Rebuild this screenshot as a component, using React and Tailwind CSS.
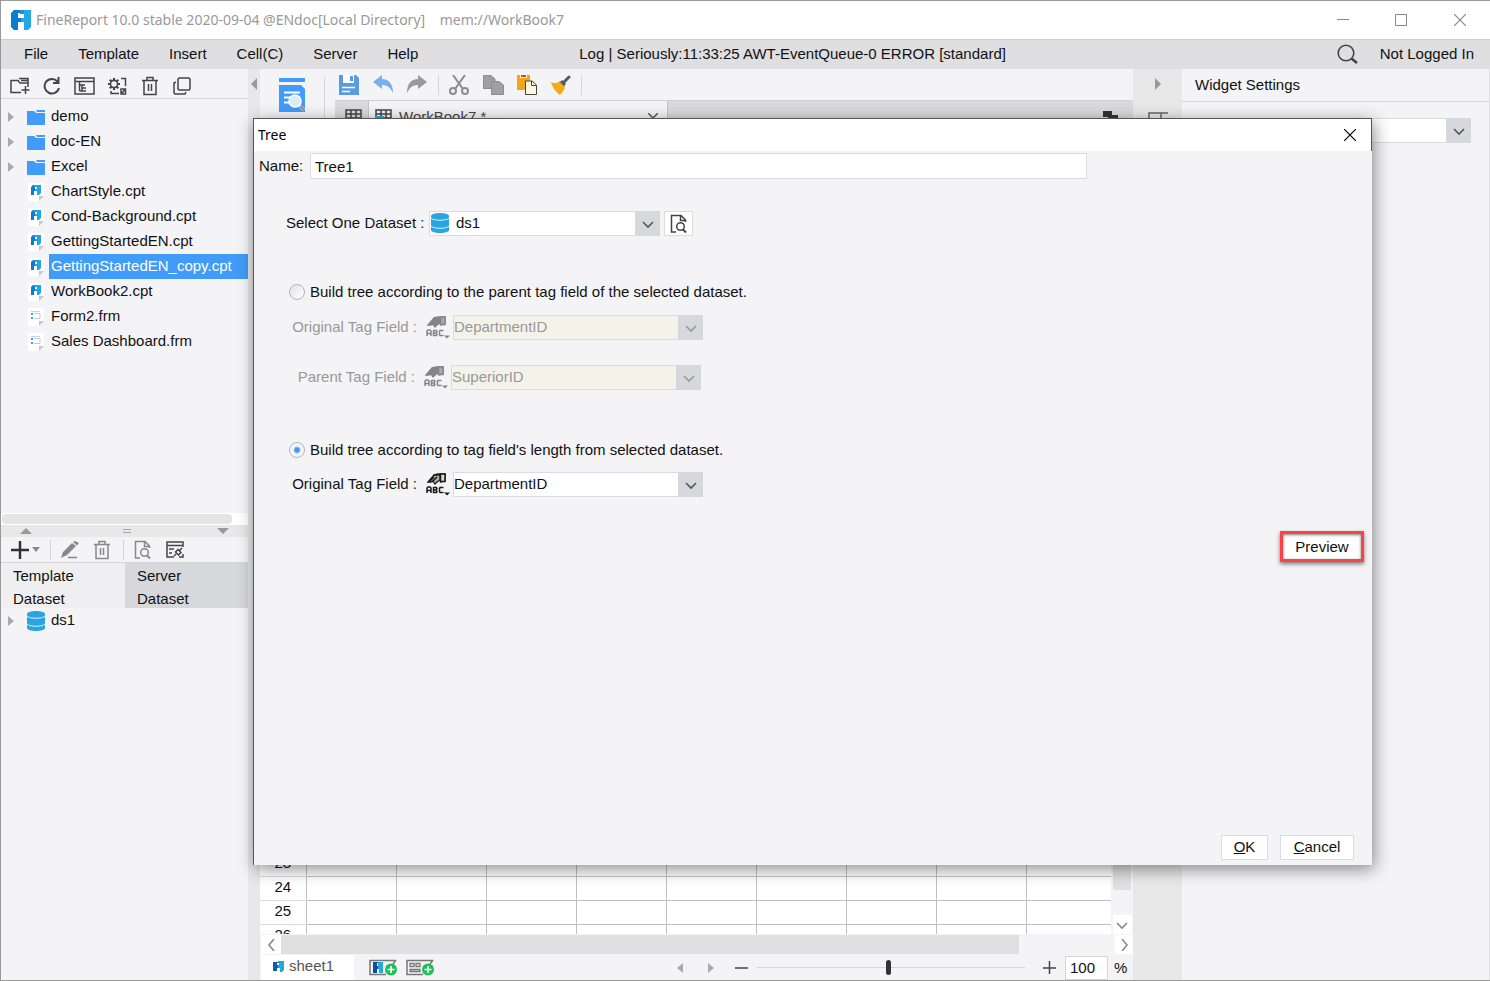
import React from 'react';

function Logo({ size = 20 }) {
  return (
    <svg width={size} height={size} viewBox="0 0 20 20" aria-hidden="true">
      <path d="M0 3L3 0H9V3H7V8H13V12H7V20H3L0 17Z" fill="#0a7dd3" />
      <path d="M9 0H20V17L17 20H13V12H10V8H13V4H9Z" fill="#27a8e6" />
      <path d="M9 0H13V4H9Z" fill="#1a93de" />
    </svg>
  );
}

function FolderIcon() {
  return (
    <svg width="18" height="16" viewBox="0 0 18 16" aria-hidden="true">
      <path d="M0 2H7L9 4H18V16H0Z" fill="#409cf8" />
      <path d="M9 1H18V3H10Z" fill="#409cf8" />
    </svg>
  );
}

function CptIcon() {
  return (
    <svg width="16" height="18" viewBox="0 0 16 18" aria-hidden="true">
      <path d="M0 0H16V12L11 18H0Z" fill="#fff" />
      <path d="M16 13L11 18V13Z" fill="#c8c8c8" />
      <path d="M3 4L5 2H7V6H9V8H6V12H3Z" fill="#0a7dd3" />
      <path d="M6 2H13V10L11 12H9V8H7V6H9V4H6Z" fill="#22a5e4" />
    </svg>
  );
}

function FrmIcon() {
  return (
    <svg width="16" height="18" viewBox="0 0 16 18" aria-hidden="true">
      <path d="M0 0H16V12L11 18H0Z" fill="#fff" />
      <path d="M16 13L11 18V13Z" fill="#c8c8c8" />
      <path d="M3 3.500H12" stroke="#c9d3dc" />
      <path d="M6 5.500H12V10.500H6" stroke="#c4ccd4" fill="none" />
      <path d="M3 5H5V7H3ZM3 9H5V11H3Z" fill="#409cf8" />
    </svg>
  );
}

function DatabaseIcon() {
  return (
    <svg width="18" height="20" viewBox="0 0 18 20" aria-hidden="true">
      <path d="M0 3C0 -1 18 -1 18 3V17C18 21 0 21 0 17Z" fill="#2ba5e0" />
      <path d="M0 5C2 8 16 8 18 5M0 13C2 16 16 16 18 13" stroke="#d5f0fc" fill="none" />
    </svg>
  );
}

function TrashIcon({ color = '#444' }) {
  return (
    <svg width="18" height="20" viewBox="0 0 18 20" fill="none" stroke={color} strokeWidth="1.500" aria-hidden="true">
      <path d="M1 4.500H17M6 4V1.500H12V4M3 5V18.500H15V5M7.500 8V15M10.500 8V15" />
    </svg>
  );
}

function DocSearchIcon({ color = '#444' }) {
  return (
    <svg width="18" height="20" viewBox="0 0 18 20" fill="none" stroke={color} strokeWidth="1.500" aria-hidden="true">
      <path d="M6 18H1.500V1.500H11L15.500 6V8M10.500 2V6.500H15" />
      <circle cx="10.500" cy="12.500" r="3.800" />
      <path d="M13 15.500L16 18.500" strokeWidth="2" />
    </svg>
  );
}

function Chevron({ d = 'down', color = '#555' }) {
  const paths = { down: 'M1 4L6 9L11 4', left: 'M9 0L4 6L9 12', right: 'M4 0L9 6L4 12' };
  return (
    <svg width="12" height="12" viewBox="0 0 12 12" fill="none" stroke={color} strokeWidth="1.600" aria-hidden="true">
      <path d={paths[d]} />
    </svg>
  );
}

function Triangle({ d = 'right', color = '#999' }) {
  const paths = { right: 'M3 0L9 6L3 12Z', left: 'M9 0L3 6L9 12Z', up: 'M0 9L6 3L12 9Z', down: 'M0 3L6 9L12 3Z' };
  return (
    <svg width="12" height="12" viewBox="0 0 12 12" aria-hidden="true">
      <path d={paths[d]} fill={color} />
    </svg>
  );
}

function SmallTriangle({ d = 'right' }) {
  return (
    <svg width="6" height="10" viewBox="0 0 6 10" aria-hidden="true">
      <path d={d === 'right' ? 'M0 0L6 5L0 10Z' : 'M6 0L0 5L6 10Z'} fill="#aaa" />
    </svg>
  );
}

function CloseIcon({ color }) {
  return (
    <svg width="12" height="12" viewBox="0 0 12 12" stroke={color} strokeWidth="1.200" aria-hidden="true">
      <path d="M0 0L12 12M12 0L0 12" />
    </svg>
  );
}

function IconButton({ label, className = 'w-8', children }) {
  return (
    <button type="button" aria-label={label} className={`flex h-full shrink-0 items-center justify-center ${className}`}>
      {children}
    </button>
  );
}

function TitleBar() {
  return (
    <header className="flex h-[38px] shrink-0 items-center bg-white pl-[10px] text-[#999]">
      <Logo />
      <h1 className="ml-[5px] flex-1 whitespace-pre font-['Noto_Sans','Open_Sans',sans-serif] text-sm">
        FineReport 10.0 stable 2020-09-04 @ENdoc[Local Directory]{'    '}mem://WorkBook7
      </h1>
      <IconButton label="Minimize" className="w-[58px]">
        <svg width="12" height="12" stroke="#888" aria-hidden="true"><path d="M0 5.500H12" /></svg>
      </IconButton>
      <IconButton label="Maximize" className="w-[58px]">
        <svg width="12" height="12" stroke="#888" fill="none" aria-hidden="true"><path d="M.5 .5H11.500V11.500H.5Z" /></svg>
      </IconButton>
      <IconButton label="Close" className="w-[60px]"><CloseIcon color="#888" /></IconButton>
    </header>
  );
}

function MenuBar() {
  return (
    <nav className="flex h-[30px] shrink-0 items-center gap-[30px] border-t border-[#cfcfd0] bg-[#dfdfe1] pr-4 pb-[2px] pl-[23px]">
      {['File', 'Template', 'Insert', 'Cell(C)', 'Server', 'Help'].map((m) => (
        <button type="button" key={m}>{m}</button>
      ))}
      <p className="ml-[131px] flex-1 truncate">Log | Seriously:11:33:25 AWT-EventQueue-0 ERROR [standard]</p>
      <div className="flex items-center gap-[22px]">
        <button type="button" aria-label="Search">
          <svg width="21" height="20" viewBox="0 0 21 20" fill="none" stroke="#444" aria-hidden="true">
            <circle cx="9" cy="9" r="7.800" strokeWidth="1.600" />
            <path d="M14.500 14.500L20 19" strokeWidth="2.600" />
          </svg>
        </button>
        <button type="button">Not Logged In</button>
      </div>
    </nav>
  );
}

const files = [
  ['demo', 'dir'],
  ['doc-EN', 'dir'],
  ['Excel', 'dir'],
  ['ChartStyle.cpt', 'cpt'],
  ['Cond-Background.cpt', 'cpt'],
  ['GettingStartedEN.cpt', 'cpt'],
  ['GettingStartedEN_copy.cpt', 'cpt'],
  ['WorkBook2.cpt', 'cpt'],
  ['Form2.frm', 'frm'],
  ['Sales Dashboard.frm', 'frm'],
];

function TreeRow({ name, kind, selected }) {
  const icons = { dir: <FolderIcon />, cpt: <CptIcon />, frm: <FrmIcon />, db: <DatabaseIcon /> };
  return (
    <li className="flex h-[25px] items-center">
      <span className="flex w-[25px] items-center pl-[7px]">{(kind === 'dir' || kind === 'db') && <SmallTriangle />}</span>
      <span className="flex w-5 justify-center">{icons[kind]}</span>
      <span className={`ml-[3px] h-[25px] flex-1 truncate pl-0.5 leading-6 ${selected ? 'bg-[#409cf8] text-white' : ''}`}>{name}</span>
    </li>
  );
}

function LeftPanel() {
  return (
    <aside className="flex w-[247px] shrink-0 flex-col">
      <section className="flex h-[456px] shrink-0 flex-col">
        <div className="flex h-[30px] shrink-0 items-center border-b border-[#d6d6d9] pt-1 pl-[3px]">
          <IconButton label="New folder">
            <svg width="20" height="18" viewBox="0 0 20 18" fill="none" stroke="#444" strokeWidth="1.500" aria-hidden="true">
              <path d="M11 15.500H1V3.500H8L10 6H18V10M9 1.500H18V6M11 3.500H18M15.500 9V17M11.500 13H19.500" />
            </svg>
          </IconButton>
          <IconButton label="Refresh">
            <svg width="18" height="18" viewBox="0 0 18 18" fill="none" stroke="#444" strokeWidth="2" aria-hidden="true">
              <path d="M16 11A7.300 7.300 0 1 1 14.500 4.500M15.500 0V6H10" />
            </svg>
          </IconButton>
          <IconButton label="Open location">
            <svg width="21" height="18" viewBox="0 0 21 18" fill="none" stroke="#444" strokeWidth="1.500" aria-hidden="true">
              <path d="M1 1H20V17H1ZM1 4.500H20M5.500 4.500V14M5.500 8H11M7.500 11H12M5.500 14H12M8 8V14" />
            </svg>
          </IconButton>
          <IconButton label="Template settings" className="w-[34px]">
            <svg width="20" height="18" viewBox="0 0 20 18" fill="none" stroke="#444" strokeWidth="1.500" aria-hidden="true">
              <circle cx="7" cy="7" r="3.500" />
              <path d="M7 1V3.500M7 10.500V13M1 7H3.500M10.500 7H13M2.800 2.800L4.500 4.500M9.500 9.500L11.200 11.200M11.200 2.800L9.500 4.500M2.800 11.200L4.500 9.500" strokeWidth="2.200" />
              <path d="M14 1.500H18.500V9M4 14V16.500H12M14 12H18.500V17H14ZM15 16L18 12.500" />
            </svg>
          </IconButton>
          <IconButton label="Delete"><TrashIcon /></IconButton>
          <IconButton label="Copy path">
            <svg width="18" height="18" viewBox="0 0 18 18" fill="none" stroke="#444" strokeWidth="1.500" aria-hidden="true">
              <path d="M6 1H16L17 2V12L16 13H6L5 12V2ZM3 5L1 6V16L2 17H12L13 15" />
            </svg>
          </IconButton>
        </div>
        <ul className="min-h-0 flex-1 overflow-hidden pt-[5px]">
          {files.map(([name, kind]) => (
            <TreeRow key={name} name={name} kind={kind} selected={name === 'GettingStartedEN_copy.cpt'} />
          ))}
        </ul>
        <div className="h-3 bg-white py-px pr-4 pl-px">
          <div className="h-full rounded bg-[#e4e4e4]" />
        </div>
      </section>
      <div className="flex h-3 shrink-0 items-center justify-between bg-[#e8e8e8] pr-[19px] pl-[19px]">
        <Triangle d="up" />
        <span className="ml-1 h-1 w-2 border-y border-[#aaa]" />
        <Triangle d="down" />
      </div>
      <div className="flex h-[26px] shrink-0 items-center border-b border-[#d6d6d9]">
        <IconButton label="Add dataset" className="w-12 gap-[3px]">
          <svg width="18" height="18" stroke="#333" strokeWidth="2.500" aria-hidden="true"><path d="M0 9H18M9 0V18" /></svg>
          <svg width="8" height="5" aria-hidden="true"><path d="M0 0H8L4 5Z" fill="#888" /></svg>
        </IconButton>
        <span className="mx-px h-5 w-px bg-[#d6d6d9]" />
        <IconButton label="Edit" className="w-9">
          <svg width="18" height="18" viewBox="0 0 18 18" aria-hidden="true">
            <path d="M0 17L2 11L11 2L15 5L6 14ZM12 1L14 0L18 2L16 4.500Z" fill="#888" />
            <path d="M7 16.500H16" stroke="#888" strokeWidth="1.500" />
          </svg>
        </IconButton>
        <IconButton label="Delete dataset" className="w-7"><TrashIcon color="#888" /></IconButton>
        <span className="mx-[7px] h-5 w-px bg-[#d6d6d9]" />
        <IconButton label="Preview dataset" className="w-6"><DocSearchIcon color="#888" /></IconButton>
        <IconButton label="Connection settings" className="w-10">
          <svg width="18" height="17" viewBox="0 0 18 17" fill="none" stroke="#444" strokeWidth="1.500" aria-hidden="true">
            <path d="M8 16H1V1H17V6M1 4.500H17M3 8H8M3 12H6M13 16H17V13M8 15L10 13M13 10L16 7" />
            <path d="M9.500 11L12 8.500L15 11.500L12.500 14Z" />
          </svg>
        </IconButton>
      </div>
      <div className="flex h-[45px] shrink-0 leading-[23px]">
        <button type="button" className="flex w-[124px] items-start bg-[#efeff1] pt-px pr-8 pl-3 text-left">Template Dataset</button>
        <button type="button" className="flex flex-1 items-start bg-[#d7d8db] pt-px pr-12 pl-3 text-left">Server Dataset</button>
      </div>
      <ul>
        <TreeRow name="ds1" kind="db" />
      </ul>
    </aside>
  );
}

function GridIcon({ accent }) {
  return (
    <svg width="17" height="16" viewBox="0 0 17 16" fill="none" stroke="#444" strokeWidth="1.500" aria-hidden="true">
      <path d="M1 1H16V15H1ZM1 5H16M1 9H16M6 1V15M11 1V15" />
      {accent && <path d="M0 7H9V16H0Z" fill="#2ba5e0" stroke="none" />}
    </svg>
  );
}

function Toolbar() {
  return (
    <div className="flex h-[31px] shrink-0 items-center pl-[7px]">
      <IconButton label="Save" className="w-[34px]">
        <svg width="20" height="20" viewBox="0 0 20 20" aria-hidden="true">
          <path d="M0 0H17L20 3V20H0Z" fill="#5b9be0" />
          <path d="M4 0H15V8H4Z" fill="#fff" />
          <path d="M11 1H14V6H11Z" fill="#5b9be0" />
          <path d="M3 12.500H16M3 16.500H11" stroke="#fff" strokeWidth="1.500" />
        </svg>
      </IconButton>
      <IconButton label="Undo" className="w-[34px]">
        <svg width="20" height="19" viewBox="0 0 20 19" aria-hidden="true"><path d="M0 7L9 0V4C16 4 20 9 20 18C17 12 14 10 9 10V14Z" fill="#78b0ee" /></svg>
      </IconButton>
      <IconButton label="Redo" className="w-[34px]">
        <svg width="20" height="19" viewBox="0 0 20 19" aria-hidden="true"><path d="M20 7L11 0V4C4 4 0 9 0 18C3 12 6 10 11 10V14Z" fill="#999" /></svg>
      </IconButton>
      <span className="mr-[3px] ml-1 h-5 w-px bg-[#d6d6d9]" />
      <IconButton label="Cut" className="w-[34px]">
        <svg width="20" height="20" viewBox="0 0 20 20" fill="none" stroke="#8c8c8c" strokeWidth="2" aria-hidden="true">
          <path d="M4 0L14 14M16 0L6 14" />
          <circle cx="4" cy="16" r="3" />
          <circle cx="16" cy="16" r="3" />
        </svg>
      </IconButton>
      <IconButton label="Copy" className="w-[34px]">
        <svg width="21" height="20" viewBox="0 0 21 20" fill="#a0a0a0" stroke="#8c8c8c" aria-hidden="true">
          <path d="M.5 .5H8L12 4V13.500H.5Z" />
          <path d="M8.500 6.500H16L20.500 10V19.500H8.500Z" />
        </svg>
      </IconButton>
      <IconButton label="Paste" className="w-[34px]">
        <svg width="20" height="20" viewBox="0 0 20 20" aria-hidden="true">
          <path d="M0 0H13V15H0Z" fill="#f0a818" />
          <path d="M3 0H10V3H3Z" fill="#fff3d8" />
          <path d="M4 0H9V2H4Z" fill="#d5462c" />
          <path d="M8.500 6H15L19.500 10V19.500H8.500Z" fill="#fff6e0" stroke="#444" />
          <path d="M14.500 6V10.500H19" fill="none" stroke="#444" />
        </svg>
      </IconButton>
      <IconButton label="Format brush" className="w-[34px]">
        <svg width="20" height="20" viewBox="0 0 20 20" aria-hidden="true">
          <path d="M0 7C4 9 6 8 9 6L14 11C14 14 12 17 9 20C6 18 2 14 0 7Z" fill="#f2ab1c" />
          <path d="M9 7L11 5L15 9L13 11Z" fill="#555a66" />
          <path d="M12 8L18 2" stroke="#555a66" strokeWidth="3" strokeLinecap="round" />
        </svg>
      </IconButton>
      <span className="ml-[3px] h-5 w-px bg-[#d6d6d9]" />
    </div>
  );
}

function SheetTable() {
  return (
    <table className="w-full table-fixed border-collapse bg-white">
      <colgroup>
        <col className="w-[46px]" />
        {Array.from({ length: 8 }, (_, i) => <col key={i} className="w-[90px]" />)}
        <col />
      </colgroup>
      <tbody>
        {[23, 24, 25, 26].map((n) => (
          <tr key={n} className="h-6">
            <th scope="row" className="h-6 border-r border-b border-[#c0c0c0] border-b-[#dcdcdc] p-0 pb-[2px] text-center leading-5 font-normal">{n}</th>
            {Array.from({ length: 9 }, (_, i) => (
              <td key={i} className="border-b border-l border-[#c0c0c0] p-0" />
            ))}
          </tr>
        ))}
      </tbody>
    </table>
  );
}

function AddSheet({ children }) {
  return (
    <svg width="28" height="17" viewBox="0 0 28 17" aria-hidden="true">
      <path d="M27 1.500H1V15.500H17M24 5L27 1" fill="none" stroke="#777" strokeWidth="1.500" />
      {children}
      <circle cx="22" cy="10.500" r="6" fill="#1fbf57" />
      <path d="M18.500 10.500H25.500M22 7V14" stroke="#fff" strokeWidth="1.600" />
    </svg>
  );
}

function SheetBar() {
  return (
    <div className="flex h-[25px] shrink-0 items-center">
      <button type="button" className="ml-px flex h-full w-[93px] items-center gap-[5px] bg-white pb-[3px] pl-3 text-[#555]">
        <svg width="11" height="11" viewBox="0 0 11 11" aria-hidden="true">
          <path d="M0 1H6V10H0Z" fill="#0a5fa8" />
          <path d="M5 0H11V9L9 11H5Z" fill="#29a5e0" />
          <path d="M4 7H7V11H4ZM4 2H6V4H4Z" fill="#fff" />
        </svg>
        sheet1
      </button>
      <button type="button" aria-label="Add report sheet" className="ml-[15px]">
        <AddSheet>
          <path d="M4 3H9V14H4Z" fill="#0a4fa0" />
          <path d="M9 3H14V14H9Z" fill="#29a5e0" />
          <path d="M8 10H10V14H8ZM8 4H9V7H8Z" fill="#fff" />
        </AddSheet>
      </button>
      <button type="button" aria-label="Add form sheet" className="ml-[9px]">
        <AddSheet>
          <path d="M4 4.500H8V7.500H4ZM10 4.500H14V7.500H10ZM4 10.500H14V12.500H4Z" fill="none" stroke="#777" strokeWidth="1.300" />
        </AddSheet>
      </button>
      <div className="ml-auto flex h-full items-center">
        <button type="button" aria-label="Previous sheet" className="mr-[25px]"><SmallTriangle d="left" /></button>
        <button type="button" aria-label="Next sheet" className="mr-[21px]"><SmallTriangle /></button>
        <button type="button" aria-label="Zoom out" className="mr-[9px]">
          <svg width="13" height="13" stroke="#444" strokeWidth="1.500" aria-hidden="true"><path d="M0 7H13" /></svg>
        </button>
        <input
          type="range"
          aria-label="Zoom"
          min="0"
          max="100"
          defaultValue="49"
          className="h-4 w-[268px] appearance-none bg-transparent [&::-webkit-slider-runnable-track]:h-px [&::-webkit-slider-runnable-track]:bg-[#d8d8d8] [&::-webkit-slider-thumb]:-mt-[7px] [&::-webkit-slider-thumb]:h-[15px] [&::-webkit-slider-thumb]:w-[5px] [&::-webkit-slider-thumb]:appearance-none [&::-webkit-slider-thumb]:rounded-sm [&::-webkit-slider-thumb]:bg-[#333]"
        />
        <button type="button" aria-label="Zoom in" className="mr-[9px] ml-[18px]">
          <svg width="13" height="13" stroke="#444" strokeWidth="1.500" aria-hidden="true"><path d="M0 7H13M6.500 0V13" /></svg>
        </button>
        <input id="zoom-value" aria-label="Zoom percentage" defaultValue="100" className="h-6 w-[43px] border border-[#d6d6d9] bg-white pl-1" />
        <label htmlFor="zoom-value" className="w-[25px] pl-[6px]">%</label>
      </div>
    </div>
  );
}

function Workspace() {
  return (
    <main className="flex min-w-0 flex-1 flex-col">
      <div className="flex h-[56px] shrink-0">
        <div className="flex w-16 justify-center pt-[8px]">
          <svg width="26" height="36" viewBox="0 0 26 36" aria-hidden="true">
            <path d="M0 1H26V5H0V2Z" fill="#409cf8" />
            <path d="M0 8H22L26 12V35H0Z" fill="#409cf8" />
            <path d="M5 15.500H21M5 20.500H11M5 25.500H10" stroke="#fff" strokeWidth="2" />
            <circle cx="16" cy="24" r="6" fill="#dcecfb" stroke="#fff" strokeWidth="1.500" />
            <path d="M20 28L25 33" stroke="#fff" strokeWidth="3" />
            <path d="M21 29L25 33" stroke="#888" strokeWidth="2" />
          </svg>
        </div>
        <span className="mt-2 w-px bg-[#d6d6d9]" />
        <div className="flex min-w-0 flex-1 flex-col">
          <Toolbar />
          <div className="ml-[10px] flex h-[25px] border-t border-[#d0d0d2] bg-[#dadadc]">
            <button type="button" aria-label="All templates" className="flex w-[34px] justify-center border-r border-[#c4c4c6] pt-2 pl-1"><GridIcon /></button>
            <button type="button" className="flex w-[299px] gap-[7px] border-r border-[#c4c4c6] bg-[#f4f4f6] pt-2 pr-[9px] pl-[6px] text-[#444]">
              <GridIcon accent />
              <span className="flex-1 text-left leading-4">WorkBook7 *</span>
              <svg width="10" height="10" viewBox="0 0 10 10" stroke="#555" strokeWidth="1.500" className="mt-1" aria-hidden="true"><path d="M0 0L10 10M10 0L0 10" /></svg>
            </button>
            <span className="ml-auto pt-[10px] pr-[15px]">
              <svg width="15" height="12" aria-hidden="true"><path d="M0 0H9V4H15V12H5V6H0Z" fill="#333" /></svg>
            </span>
          </div>
        </div>
      </div>
      <div className="flex min-h-0 flex-1">
        <div className="flex min-w-0 flex-1 flex-col">
          <div className="flex-1 bg-white" />
          <div className="h-[82px] shrink-0 overflow-hidden"><SheetTable /></div>
        </div>
        <div className="flex w-[22px] flex-col items-center">
          <div className="mb-[25px] w-[18px] flex-1 bg-[#e0e0e0]" />
          <button type="button" aria-label="Scroll down" className="flex h-[19px] w-[19px] items-center justify-center bg-white"><Chevron color="#888" /></button>
        </div>
      </div>
      <div className="flex h-[21px] shrink-0 items-center py-px pl-px">
        <button type="button" aria-label="Scroll left" className="flex h-full w-5 items-center justify-center bg-white"><Chevron d="left" color="#888" /></button>
        <div className="mr-24 h-full flex-1 bg-[#e0e0e0]" />
        <button type="button" aria-label="Scroll right" className="flex h-full w-[18px] items-center justify-center bg-white"><Chevron d="right" color="#888" /></button>
      </div>
      <SheetBar />
    </main>
  );
}

function RightPanel() {
  return (
    <aside className="flex w-[308px] shrink-0 flex-col border-r border-[#dedee0]">
      <h2 className="h-[33px] shrink-0 border-b border-[#d6d6d9] pl-[13px] leading-8">Widget Settings</h2>
      <div className="relative mt-4 mr-[18px] ml-[13px]">
        <select aria-label="Widget" className="h-[25px] w-full appearance-none border border-[#dcdce0] bg-white" />
        <span className="pointer-events-none absolute inset-y-0 right-0 flex w-[25px] items-center justify-center bg-[#d7d8db]"><Chevron /></span>
      </div>
    </aside>
  );
}

function Combo({ id, value, icon, disabled, className }) {
  return (
    <div className={`relative h-[25px] ${className}`}>
      {icon && <span className="pointer-events-none absolute top-[2px] left-[2px]">{icon}</span>}
      <select
        id={id}
        disabled={disabled}
        className={`h-full w-full appearance-none border border-[#dcdce0] bg-white pb-px disabled:bg-[#f3f3e9] disabled:text-[#999] disabled:opacity-100 ${icon ? 'pl-[26px]' : 'pl-0'}`}
      >
        <option>{value}</option>
      </select>
      <span className="pointer-events-none absolute inset-y-0 right-0 flex w-[25px] items-center justify-center bg-[#d7d8db]">
        <Chevron color={disabled ? '#999' : '#555'} />
      </span>
    </div>
  );
}

function FieldTypeIcon({ disabled }) {
  const ink = disabled ? '#858585' : '#1a1a1a';
  return (
    <svg width="24" height="23" viewBox="0 0 24 23" fill="none" stroke={ink} aria-hidden="true">
      <path d="M2 9L8 2H14V7L11 9L9 11L7 8L5 9Z" fill={disabled ? '#858585' : '#b9b19a'} strokeWidth="1.300" />
      <path d="M3 9L8 4M6 9L11 4M8 2L12 1H19V8L14 9" strokeWidth="1.500" />
      <path d="M14.500 1H19V8.500H14.500Z" fill={disabled ? '#aaa' : '#ddd8c8'} strokeWidth="1.500" />
      <path d="M1 20V15L2 14H4L5 15V20M1 17.500H5M7.500 14V19.500H10.500L11 18.500L10 17L11 15.500L10.500 14.500H7.500M8 17H10M17.500 14.500H14L13.500 15.500V18.500L14 19.500H17.500" strokeWidth="1.500" />
      <path d="M18 19.500H24L21 22.500Z" fill={ink} stroke="none" />
    </svg>
  );
}

function FieldRow({ id, label, value, disabled, labelWidth }) {
  return (
    <div className={`flex items-center ${disabled ? 'text-[#999]' : ''}`}>
      <label htmlFor={id} className={`pb-px text-right ${labelWidth}`}>{label}</label>
      <button type="button" disabled={disabled} aria-label="Field type" className="mr-[3px] ml-[9px]"><FieldTypeIcon disabled={disabled} /></button>
      <Combo id={id} value={value} disabled={disabled} className="w-[250px]" />
    </div>
  );
}

function BuildMode({ label, checked }) {
  return (
    <label className="flex h-5 items-center gap-[5px]">
      <input
        type="radio"
        name="build-mode"
        defaultChecked={checked}
        className="h-4 w-4 appearance-none rounded-full border border-[#b4b4b4] bg-linear-to-br from-[#e2e2e2] to-white checked:bg-[radial-gradient(circle,#4a94ee_2px,#f4f6fa_4px)]"
      />
      {label}
    </label>
  );
}

function TreeDialog() {
  return (
    <section
      role="dialog"
      aria-labelledby="dialog-title"
      className="absolute top-[117px] right-[118px] left-[252px] flex h-[747px] flex-col border-t border-l border-[#555] bg-[#f4f4f6] shadow-[2px_4px_16px_rgba(0,0,0,0.45)]"
    >
      <header className="flex h-8 shrink-0 items-center justify-between border-r border-[#555] bg-white pl-1">
        <h2 id="dialog-title" className="font-['Noto_Sans','Open_Sans',sans-serif] text-sm text-black">Tree</h2>
        <IconButton label="Close dialog" className="w-[42px]"><CloseIcon color="#000" /></IconButton>
      </header>
      <form className="flex min-h-0 flex-1 flex-col" onSubmit={(e) => e.preventDefault()}>
        <div className="flex items-center pt-[2px] pl-[5px]">
          <label htmlFor="tree-name" className="w-[51px]">Name:</label>
          <input id="tree-name" defaultValue="Tree1" className="h-[26px] w-[777px] border border-[#dcdce0] bg-white pl-1" />
        </div>
        <div className="mt-8 flex items-center pl-8">
          <label htmlFor="dataset" className="w-[143px] pb-px">Select One Dataset :</label>
          <Combo id="dataset" value="ds1" icon={<DatabaseIcon />} className="w-[231px]" />
          <button type="button" aria-label="Preview dataset" className="ml-1 flex h-[25px] w-[29px] items-center justify-center border border-[#dcdce0] bg-white"><DocSearchIcon /></button>
        </div>
        <div className="mt-[46px] pl-[35px]">
          <BuildMode label="Build tree according to the parent tag field of the selected dataset." />
          <div className="mt-[13px] flex flex-col gap-[25px]">
            <FieldRow id="original-1" label="Original Tag Field :" value="DepartmentID" disabled labelWidth="w-[128px]" />
            <FieldRow id="parent-1" label="Parent Tag Field :" value="SuperiorID" disabled labelWidth="w-[126px]" />
          </div>
        </div>
        <div className="mt-[50px] pl-[35px]">
          <BuildMode checked label="Build tree according to tag field's length from selected dataset." />
          <div className="mt-3">
            <FieldRow id="original-2" label="Original Tag Field :" value="DepartmentID" labelWidth="w-[128px]" />
          </div>
        </div>
        <div className="mt-[34px] flex justify-end pr-2">
          <button type="button" className="h-[31px] w-[84px] border-3 border-[#f84444] bg-white shadow-[0_2px_4px_rgba(0,0,0,0.5),inset_0_1px_3px_rgba(0,0,0,0.5)]">Preview</button>
        </div>
        <div className="mt-auto flex justify-end gap-3 pr-[18px] pb-[5px]">
          <button type="submit" className="h-[25px] w-[47px] border border-[#dcdce0] bg-white pb-px"><u>O</u>K</button>
          <button type="button" className="h-[25px] w-[74px] border border-[#dcdce0] bg-white pb-px"><u>C</u>ancel</button>
        </div>
      </form>
    </section>
  );
}

export default function App() {
  return (
    <div className="relative flex h-screen min-h-[900px] flex-col overflow-hidden border-t border-b border-l border-[#999] bg-[#f4f4f6] font-['Liberation_Sans',Arial,sans-serif] text-[15px] leading-5 text-[#111]">
      <TitleBar />
      <MenuBar />
      <div className="flex min-h-0 flex-1">
        <LeftPanel />
        <div className="flex w-3 shrink-0 flex-col items-center bg-[#e8e8e8] pt-[9px]"><Triangle d="left" /></div>
        <Workspace />
        <div className="flex w-[49px] shrink-0 flex-col items-center bg-[#e8e8e8] pt-[9px]">
          <Triangle />
          <svg width="20" height="14" viewBox="0 0 20 14" fill="none" stroke="#666" strokeWidth="1.500" className="mt-[22px]" aria-hidden="true"><path d="M1 14V1H20M13 1V14" /></svg>
        </div>
        <RightPanel />
      </div>
      <TreeDialog />
    </div>
  );
}
